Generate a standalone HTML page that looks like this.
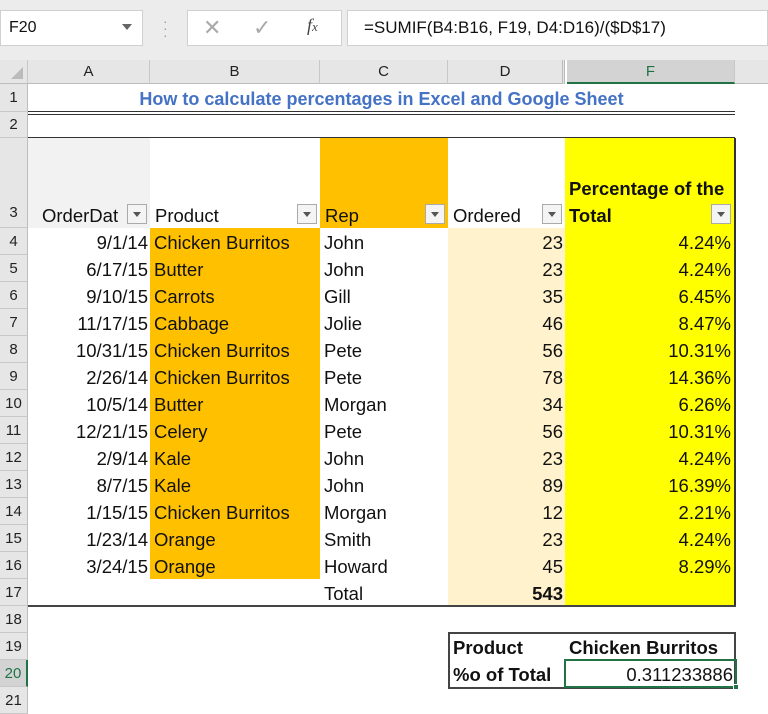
<!DOCTYPE html><html><head><meta charset="utf-8"><style>
*{margin:0;padding:0;box-sizing:border-box}
body{width:768px;height:706px;overflow:hidden;background:#fff;font-family:"Liberation Sans",sans-serif;position:relative;color:#111}
.a{position:absolute}
.t{position:absolute;font-size:18.5px;line-height:27px;white-space:nowrap;letter-spacing:0}
.r{text-align:right}
.rh{position:absolute;left:0;width:28px;background:#e6e6e6;border-bottom:1px solid #c8c8c8;border-right:1px solid #bdbdbd;font-size:15px;color:#222;text-align:center}
.ch{position:absolute;top:60px;height:24px;background:#e6e6e6;border-right:1px solid #c8c8c8;border-bottom:1px solid #bdbdbd;font-size:15px;text-align:center;line-height:24px;color:#222}
.dd{position:absolute;width:20px;height:20px;background:#f4f4f4;border:1px solid #aaa}
.dd:after{content:"";position:absolute;left:5px;top:7px;border-left:4px solid transparent;border-right:4px solid transparent;border-top:5px solid #555}
</style></head><body>
<div class="a" style="left:0;top:0;width:768px;height:60px;background:#ececec"></div>
<div class="a" style="left:0;top:10px;width:143px;height:36px;background:#fff;border:1px solid #d0d0d0;font-size:16px;line-height:34px;padding-left:8px">F20</div>
<div class="a" style="left:122px;top:24px;border-left:5px solid transparent;border-right:5px solid transparent;border-top:6px solid #666"></div>
<div class="a" style="left:163px;top:18px;color:#999;font-size:14px;line-height:7px">·<br>·<br>·</div>
<div class="a" style="left:187px;top:10px;width:155px;height:36px;background:#fff;border:1px solid #d0d0d0"></div>
<div class="a" style="left:203px;top:15px;font-size:22px;color:#aaa">✕</div>
<div class="a" style="left:253px;top:15px;font-size:22px;color:#aaa">✓</div>
<div class="a" style="left:307px;top:15px;font-size:18px;font-style:italic;font-family:'Liberation Serif',serif;color:#444">f<span style="font-size:13px">x</span></div>
<div class="a" style="left:347px;top:10px;width:421px;height:36px;background:#fff;border:1px solid #d0d0d0;font-size:17px;line-height:34px;padding-left:16px">=SUMIF(B4:B16, F19, D4:D16)/($D$17)</div>
<div class="ch" style="left:0;width:28px"><div class="a" style="right:4px;bottom:4px;border-left:12px solid transparent;border-bottom:12px solid #bbb"></div></div>
<div class="ch" style="left:28px;width:122px">A</div>
<div class="ch" style="left:150px;width:170px">B</div>
<div class="ch" style="left:320px;width:128px">C</div>
<div class="ch" style="left:448px;width:117px;border-right:3px double #bbb">D</div>
<div class="ch" style="left:567px;width:168px;background:#d3d3d3;border-bottom:2px solid #217346;color:#217346">F</div>
<div class="a" style="left:735px;top:60px;width:33px;height:24px;background:#e6e6e6;border-bottom:1px solid #bdbdbd"></div>
<div class="rh" style="top:84px;height:28px;line-height:28px">1</div>
<div class="rh" style="top:112px;height:26px;line-height:26px">2</div>
<div class="rh" style="top:138px;height:90px;line-height:150px">3</div>
<div class="rh" style="top:228px;height:27px;line-height:27px">4</div>
<div class="rh" style="top:255px;height:27px;line-height:27px">5</div>
<div class="rh" style="top:282px;height:27px;line-height:27px">6</div>
<div class="rh" style="top:309px;height:27px;line-height:27px">7</div>
<div class="rh" style="top:336px;height:27px;line-height:27px">8</div>
<div class="rh" style="top:363px;height:27px;line-height:27px">9</div>
<div class="rh" style="top:390px;height:27px;line-height:27px">10</div>
<div class="rh" style="top:417px;height:27px;line-height:27px">11</div>
<div class="rh" style="top:444px;height:27px;line-height:27px">12</div>
<div class="rh" style="top:471px;height:27px;line-height:27px">13</div>
<div class="rh" style="top:498px;height:27px;line-height:27px">14</div>
<div class="rh" style="top:525px;height:27px;line-height:27px">15</div>
<div class="rh" style="top:552px;height:27px;line-height:27px">16</div>
<div class="rh" style="top:579px;height:27px;line-height:27px">17</div>
<div class="rh" style="top:606px;height:27px;line-height:27px">18</div>
<div class="rh" style="top:633px;height:27px;line-height:27px">19</div>
<div class="rh" style="top:660px;height:27px;line-height:27px;background:#d3d3d3;color:#217346;border-right:2px solid #217346">20</div>
<div class="rh" style="top:687px;height:27px;line-height:27px">21</div>
<div class="a" style="left:28px;top:84px;width:707px;height:28px;text-align:center;color:#4472c4;font-weight:bold;font-size:18px;line-height:31px">How to calculate percentages in Excel and Google Sheet</div>
<div class="a" style="left:28px;top:111px;width:707px;height:4px;border-top:1px solid #333;border-bottom:1px solid #333"></div>
<div class="a" style="left:28px;top:137px;width:707px;height:1px;background:#333"></div>
<div class="a" style="left:28px;top:138px;width:122px;height:90px;background:#f2f2f2"></div>
<div class="a" style="left:320px;top:138px;width:128px;height:90px;background:#ffc000"></div>
<div class="a" style="left:150px;top:228px;width:170px;height:351px;background:#ffc000"></div>
<div class="a" style="left:448px;top:228px;width:117px;height:378px;background:#fff2cc"></div>
<div class="a" style="left:565px;top:138px;width:171px;height:468px;background:#ff0;border-right:2px solid #333"></div>
<div class="a" style="left:28px;top:605px;width:708px;height:2px;background:#444"></div>
<div class="t" style="left:42px;top:202px">OrderDat</div><div class="dd" style="left:127px;top:204px"></div>
<div class="t" style="left:155px;top:202px">Product</div><div class="dd" style="left:297px;top:204px"></div>
<div class="t" style="left:325px;top:202px">Rep</div><div class="dd" style="left:425px;top:204px"></div>
<div class="t" style="left:453px;top:202px">Ordered</div><div class="dd" style="left:542px;top:204px"></div>
<div class="t" style="left:569px;top:175px;font-weight:bold">Percentage of the</div>
<div class="t" style="left:569px;top:202px;font-weight:bold">Total</div><div class="dd" style="left:711px;top:204px"></div>
<div class="t r" style="left:28px;width:120px;top:229px;line-height:27px">9/1/14<br>6/17/15<br>9/10/15<br>11/17/15<br>10/31/15<br>2/26/14<br>10/5/14<br>12/21/15<br>2/9/14<br>8/7/15<br>1/15/15<br>1/23/14<br>3/24/15</div>
<div class="t" style="left:154px;top:229px">Chicken Burritos<br>Butter<br>Carrots<br>Cabbage<br>Chicken Burritos<br>Chicken Burritos<br>Butter<br>Celery<br>Kale<br>Kale<br>Chicken Burritos<br>Orange<br>Orange</div>
<div class="t" style="left:324px;top:229px">John<br>John<br>Gill<br>Jolie<br>Pete<br>Pete<br>Morgan<br>Pete<br>John<br>John<br>Morgan<br>Smith<br>Howard<br>Total</div>
<div class="t r" style="left:448px;width:115px;top:229px">23<br>23<br>35<br>46<br>56<br>78<br>34<br>56<br>23<br>89<br>12<br>23<br>45<br><b>543</b></div>
<div class="t r" style="left:567px;width:164px;top:229px">4.24%<br>4.24%<br>6.45%<br>8.47%<br>10.31%<br>14.36%<br>6.26%<br>10.31%<br>4.24%<br>16.39%<br>2.21%<br>4.24%<br>8.29%</div>
<div class="a" style="left:448px;top:632px;width:288px;height:57px;border:2px solid #444"></div>
<div class="t" style="left:453px;top:634px;font-weight:bold">Product</div>
<div class="t" style="left:569px;top:634px;font-weight:bold">Chicken Burritos</div>
<div class="t" style="left:453px;top:661px;font-weight:bold">%o of Total</div>
<div class="a" style="left:564px;top:659px;width:173px;height:29px;border:2px solid #217346"></div>
<div class="t r" style="left:567px;width:166px;top:661px">0.311233886</div>
<div class="a" style="left:733px;top:684px;width:6px;height:6px;background:#217346;border:1px solid #fff"></div>
</body></html>
